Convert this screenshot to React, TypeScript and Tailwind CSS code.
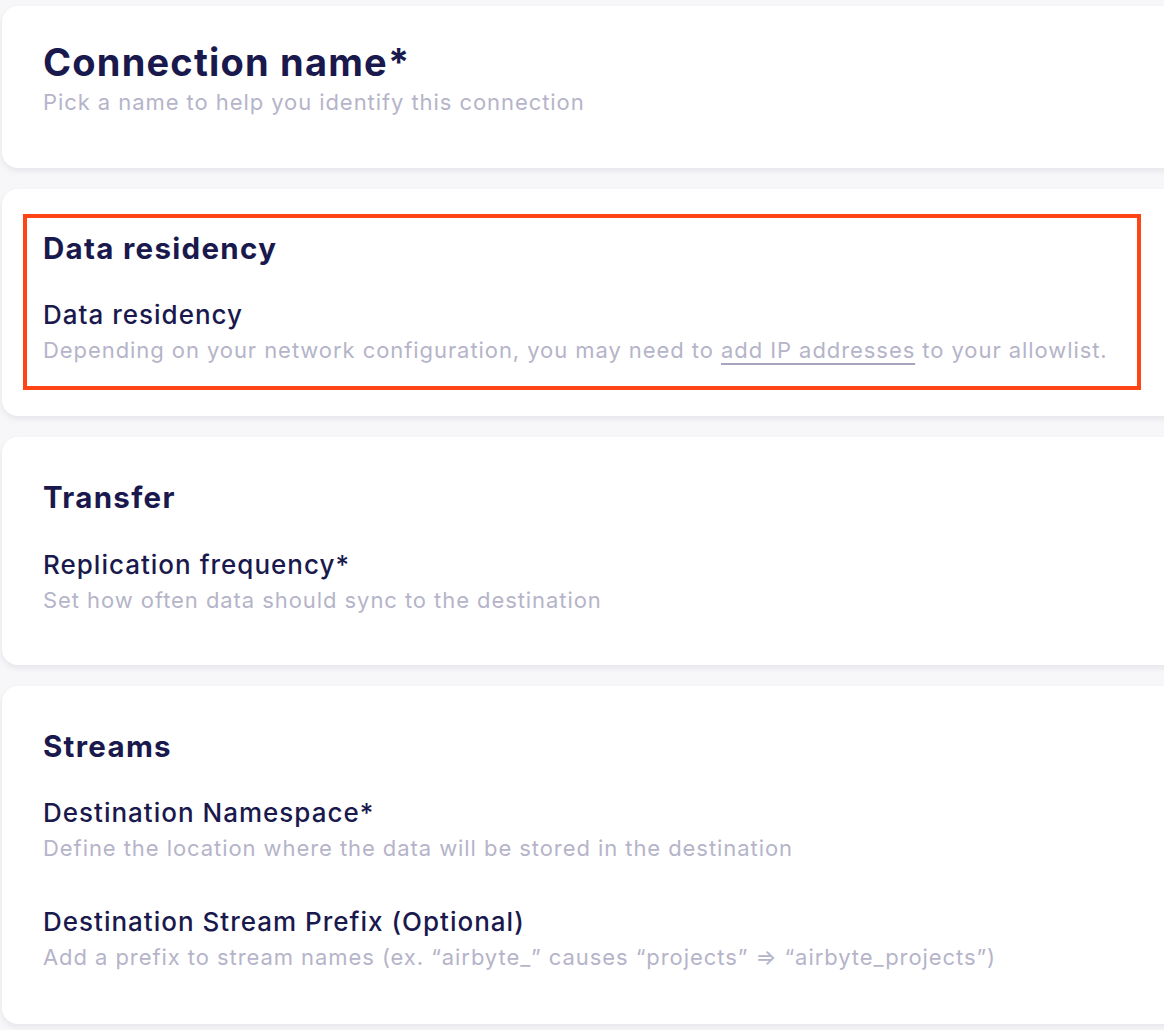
import React from 'react';

const font = { fontFamily: 'Inter, "Noto Sans", sans-serif' };

function Card({
  children,
  className = '',
}: {
  children: React.ReactNode;
  className?: string;
}) {
  return (
    <div
      className={`relative ml-[2px] w-[1200px] rounded-l-[16px] bg-white pl-[41px] shadow-[0_3px_6px_rgba(26,25,77,0.08)] ${className}`}
    >
      {children}
    </div>
  );
}

function Field({ label, help }: { label: string; help: React.ReactNode }) {
  return (
    <div className="flex flex-col">
      <div className="text-[26px] leading-[35px] font-medium tracking-[1px] text-[#1a194d]">
        {label}
      </div>
      <div className="text-[22px] leading-[36px] tracking-[0.93px] text-[#b5b4c9]">
        {help}
      </div>
    </div>
  );
}

function SectionTitle({ children }: { children: React.ReactNode }) {
  return (
    <h2 className="text-[29.5px] leading-[40px] font-bold tracking-[1.3px] text-[#1a194d]">
      {children}
    </h2>
  );
}

export default function App() {
  return (
    <div
      className="h-[1030px] w-[1164px] overflow-hidden bg-[#f7f7f9] pt-[6px]"
      style={font}
    >
      <div className="flex flex-col gap-[21px]">
        <Card className="h-[162px] pt-[34px]">
          <h1 className="text-[38px] leading-[44px] font-bold tracking-[1.2px] text-[#1a194d]">
            Connection name*
          </h1>
          <p className="text-[22px] leading-[36px] tracking-[0.93px] text-[#b5b4c9]">
            Pick a name to help you identify this connection
          </p>
        </Card>

        <Card className="h-[227px] pt-[39px]">
          <SectionTitle>Data residency</SectionTitle>
          <div className="mt-[29px]">
            <Field
              label="Data residency"
              help={
                <>
                  Depending on your network configuration, you may need to{' '}
                  <a className="underline decoration-[#a6a5bc] decoration-[1.5px] underline-offset-[5px]">
                    add IP addresses
                  </a>{' '}
                  to your allowlist.
                </>
              }
            />
          </div>
          <div className="pointer-events-none absolute top-[25px] left-[21px] h-[176px] w-[1118px] border-[4px] border-[#ff4416]" />
        </Card>

        <Card className="h-[228px] pt-[40px]">
          <SectionTitle>Transfer</SectionTitle>
          <div className="mt-[30px]">
            <Field
              label="Replication frequency*"
              help="Set how often data should sync to the destination"
            />
          </div>
        </Card>

        <Card className="h-[338px] pt-[40px]">
          <SectionTitle>Streams</SectionTitle>
          <div className="mt-[29px] flex flex-col gap-[38px]">
            <Field
              label="Destination Namespace*"
              help="Define the location where the data will be stored in the destination"
            />
            <Field
              label="Destination Stream Prefix (Optional)"
              help={'Add a prefix to stream names (ex. \u201cairbyte_\u201d causes \u201cprojects\u201d \u21d2 \u201cairbyte_projects\u201d)'}
            />
          </div>
        </Card>
      </div>
    </div>
  );
}
